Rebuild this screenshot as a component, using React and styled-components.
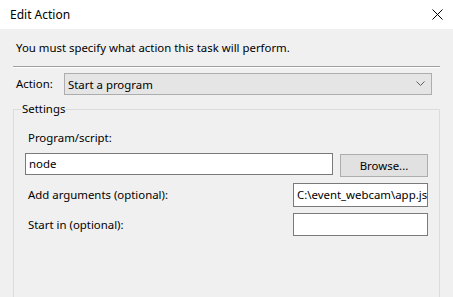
import React from 'react';
import styled, { createGlobalStyle } from 'styled-components';

const GlobalStyle = createGlobalStyle`
  html, body {
    margin: 0;
    padding: 0;
    background: #f0f0f0;
    overflow: hidden;
  }
  body {
    font-family: "Noto Sans", "Open Sans", sans-serif;
    font-size: 11.4px;
    color: #000;
  }
`;

const Window = styled.div`
  width: 453px;
  height: 297px;
  display: flex;
  flex-direction: column;
  background: #f0f0f0;
  overflow: hidden;
`;

const TitleBar = styled.div`
  height: 29px;
  background: #fff;
  display: flex;
  align-items: center;
  justify-content: space-between;
  padding: 0 9px 0 10px;
  font-size: 12px;
  flex-shrink: 0;
`;

const CloseButton = styled.svg`
  width: 11px;
  height: 11px;
  margin-right: 1px;
`;

const Body = styled.div`
  padding: 11px 13px 0;
  display: flex;
  flex-direction: column;
`;

const Message = styled.div`
  line-height: 16px;
  padding-left: 3px;
`;

const Separator = styled.div`
  height: 1px;
  background: #a0a0a0;
  border-bottom: 1px solid #fff;
  margin-top: 10px;
`;

const ActionRow = styled.div`
  display: flex;
  align-items: center;
  margin-top: 5px;
  padding-left: 3px;
  padding-right: 8px;
`;

const ActionLabel = styled.span`
  width: 48px;
  line-height: 16px;
`;

const Combo = styled.div`
  flex: 1;
  height: 20px;
  border: 1px solid #adadad;
  background: #e5e5e5;
  display: flex;
  align-items: center;
  justify-content: space-between;
  padding: 0 6px 0 3px;
`;

const Chevron = styled.svg`
  width: 9px;
  height: 6px;
`;

const Group = styled.fieldset`
  margin: 6px 0 0;
  padding: 13px 11px 0 11px;
  border: 1px solid #dcdcdc;
  border-bottom: none;
  height: 200px;
  min-width: 0;
`;

const Legend = styled.legend`
  padding: 0 1px;
  margin-left: -4px;
  line-height: 16px;
`;

const FieldLabel = styled.div`
  line-height: 16px;
  padding-left: 3px;
`;

const ProgramRow = styled.div`
  display: flex;
  align-items: flex-start;
  gap: 7px;
  margin-top: 7px;
`;

const TextBox = styled.div`
  box-sizing: border-box;
  width: ${(p) => p.$width || 'auto'};
  flex: ${(p) => (p.$grow ? 1 : 'none')};
  height: ${(p) => p.$height || 23}px;
  border: 1px solid #7a7a7a;
  background: #fff;
  padding: 0 3px;
  line-height: ${(p) => (p.$height || 23) - 2}px;
  white-space: nowrap;
  overflow: hidden;
`;

const Button = styled.div`
  box-sizing: border-box;
  width: 88px;
  height: 23px;
  margin-top: 1px;
  border: 1px solid #adadad;
  background: #e1e1e1;
  display: flex;
  align-items: center;
  justify-content: center;
`;

const OptionRow = styled.div`
  display: flex;
  align-items: center;
  justify-content: space-between;
  margin-top: ${(p) => p.$gap}px;
`;

export default function App() {
  return (
    <Window>
      <GlobalStyle />
      <TitleBar>
        <span>Edit Action</span>
        <CloseButton viewBox="0 0 11 11">
          <path d="M0.5 0.5 L10.5 10.5 M10.5 0.5 L0.5 10.5" stroke="#000" strokeWidth="1" fill="none" />
        </CloseButton>
      </TitleBar>
      <Body>
        <Message>You must specify what action this task will perform.</Message>
        <Separator />
        <ActionRow>
          <ActionLabel>Action:</ActionLabel>
          <Combo>
            <span>Start a program</span>
            <Chevron viewBox="0 0 9 6">
              <path d="M0.5 0.5 L4.5 4.5 L8.5 0.5" stroke="#606060" strokeWidth="1" fill="none" />
            </Chevron>
          </Combo>
        </ActionRow>
        <Group>
          <Legend>Settings</Legend>
          <FieldLabel>Program/script:</FieldLabel>
          <ProgramRow>
            <TextBox $grow $height={22}>node</TextBox>
            <Button>Browse...</Button>
          </ProgramRow>
          <OptionRow $gap={6}>
            <FieldLabel>Add arguments (optional):</FieldLabel>
            <TextBox $width="135px" $height={24}>C:\event_webcam\app.js</TextBox>
          </OptionRow>
          <OptionRow $gap={6}>
            <FieldLabel>Start in (optional):</FieldLabel>
            <TextBox $width="135px" $height={23} />
          </OptionRow>
        </Group>
      </Body>
    </Window>
  );
}
